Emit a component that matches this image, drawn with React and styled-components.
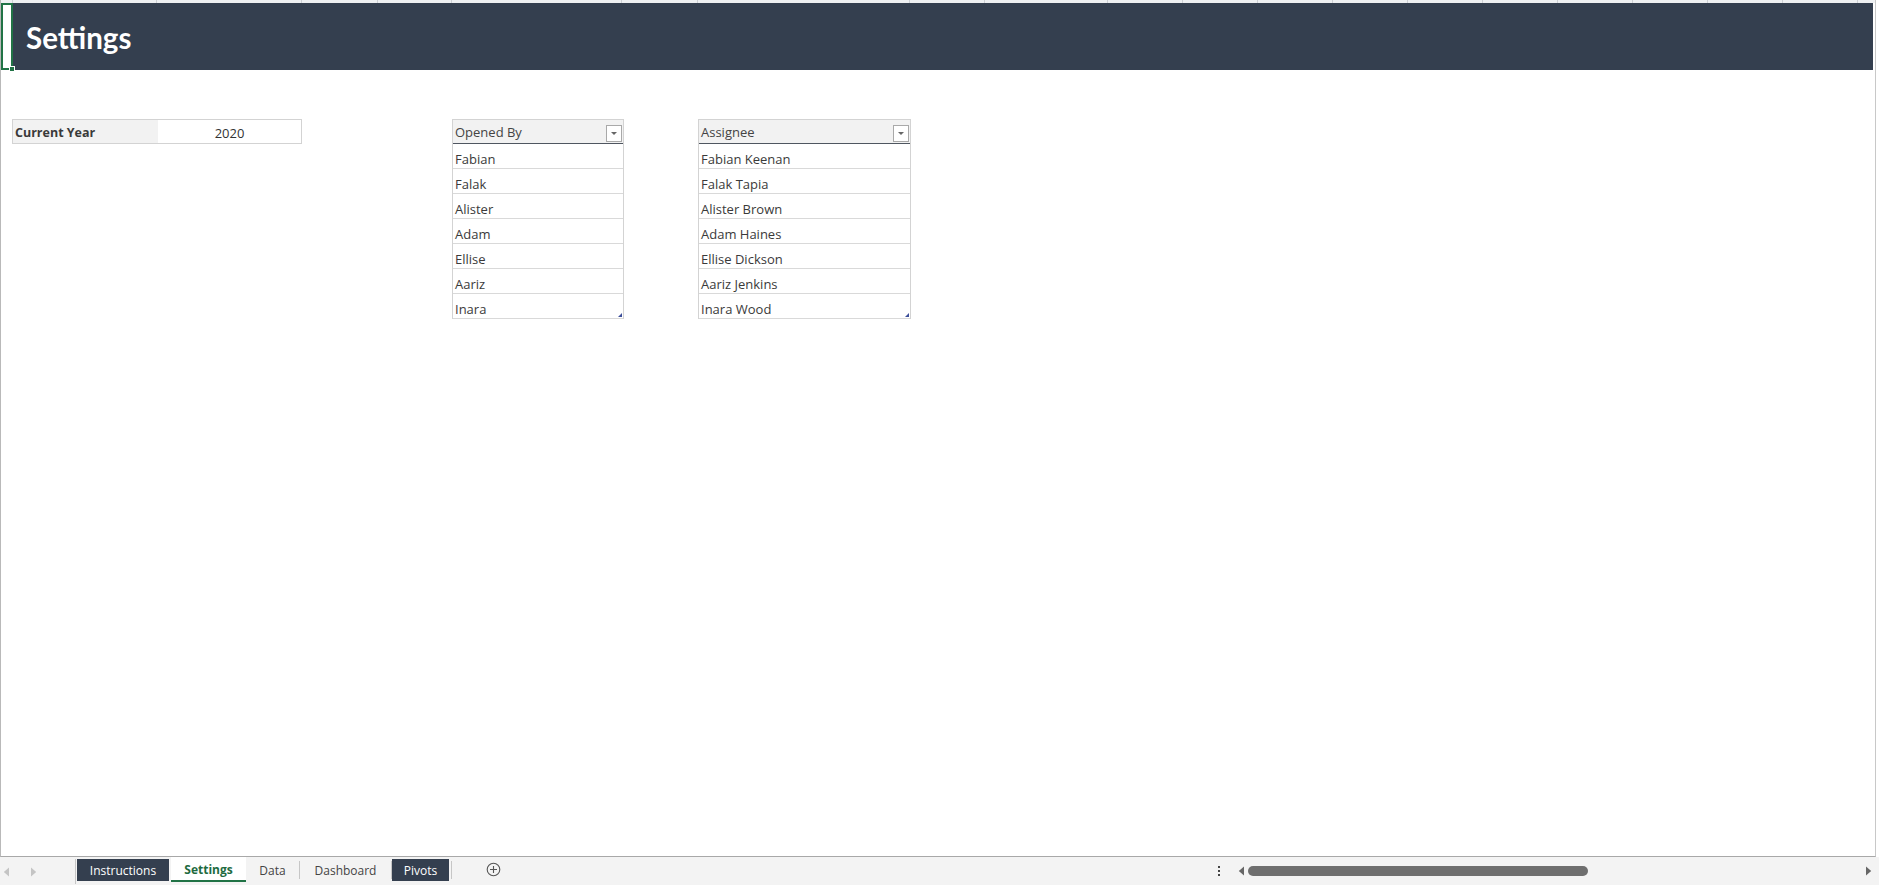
import React from 'react';
import styled, { createGlobalStyle } from 'styled-components';

const Global = createGlobalStyle`
  html, body { margin: 0; padding: 0; background: #fff; }
  body { font-family: "Open Sans", "Liberation Sans", sans-serif; color: #333; }
  #root { width: 1879px; height: 885px; overflow: hidden; }
  * { box-sizing: border-box; }
`;

const Page = styled.div`
  width: 1879px;
  height: 885px;
  display: flex;
  flex-direction: column;
  background: #fff;
`;

const Sheet = styled.div`
  flex: 1;
  min-height: 0;
  width: 1876px;
  display: flex;
  flex-direction: column;
  border-left: 1px solid #b9b9b9;
  border-right: 1px solid #c8c8c8;
  border-bottom: 1px solid #a8a8a8;
`;

const ColumnStrip = styled.div`
  display: flex;
  height: 3px;
  background: #eef0f2;
  overflow: hidden;
`;

const Col = styled.div`
  flex: 0 0 ${(p) => p.$w}px;
  border-right: 1px solid #cdd0d4;
`;

const HeaderRow = styled.div`
  display: flex;
  height: 67px;
  margin-right: 2px;
`;

const SelectedCell = styled.div`
  position: relative;
  width: 12px;
  border: 2px solid #217346;
`;

const FillHandle = styled.span`
  position: absolute;
  right: -4px;
  bottom: -4px;
  width: 6px;
  height: 6px;
  background: #217346;
  border: 1px solid #fff;
`;

const TitleBand = styled.div`
  flex: 1;
  display: flex;
  align-items: center;
  padding-left: 13px;
  background: #343f4f;
`;

const Title = styled.h1`
  margin: 0;
  padding-top: 1px;
  font-family: Lato, "Open Sans", sans-serif;
  font-weight: 700;
  font-size: 29.5px;
  color: #fff;
`;

const Content = styled.div`
  display: flex;
  align-items: flex-start;
  padding: 49px 0 0 11px;
`;

const YearBox = styled.div`
  display: flex;
  width: 290px;
  height: 25px;
  border: 1px solid #d3d3d3;
  font-size: 12.5px;
`;

const YearLabel = styled.div`
  width: 145px;
  display: flex;
  align-items: center;
  padding: 2px 0 0 2px;
  background: #f2f2f2;
  font-weight: 700;
  color: #3a3a3a;
`;

const YearValue = styled.div`
  flex: 1;
  display: flex;
  align-items: center;
  justify-content: center;
  padding-top: 2px;
  font-size: 13px;
  color: #333;
`;

const Table = styled.div`
  position: relative;
  width: ${(p) => p.$w}px;
  margin-left: ${(p) => p.$gap}px;
  border-left: 1px solid #d3d3d3;
  border-right: 1px solid #d3d3d3;
  font-size: 13px;
  color: #3a3a3a;
`;

const TableHead = styled.div`
  display: flex;
  align-items: center;
  justify-content: space-between;
  height: 25px;
  padding: 0 1px 0 2px;
  background: #f2f2f2;
  border-top: 1px solid #d3d3d3;
  border-bottom: 1px solid #4f5660;
  color: #444;
`;

const FilterButton = styled.span`
  display: flex;
  align-items: center;
  justify-content: center;
  align-self: flex-end;
  width: 16px;
  height: 17px;
  margin-bottom: 1px;
  background: #fff;
  border: 1px solid #a9a9a9;
`;

const Row = styled.div`
  height: 25px;
  display: flex;
  align-items: center;
  padding: 6px 0 0 2px;
  border-bottom: 1px solid #d9d9d9;
`;

const ResizeHandle = styled.span`
  position: absolute;
  right: 1px;
  bottom: 2px;
  width: 0;
  height: 0;
  border-left: 4px solid transparent;
  border-bottom: 4px solid #3d4f9a;
`;

const BottomBar = styled.div`
  height: 28px;
  display: flex;
  align-items: flex-start;
  background: #f3f3f3;
  font-size: 12px;
`;

const NavArrows = styled.div`
  width: 76px;
  height: 25px;
  display: flex;
  align-items: center;
  gap: 20px;
  padding-left: 3px;
  border-right: 1px solid #c6c6c6;
  margin-top: 2px;
`;

const Tabs = styled.div`
  display: flex;
  align-items: flex-start;
  padding-left: 1px;
`;

const Tab = styled.div`
  height: ${(p) => (p.$variant === 'active' ? 25 : 22)}px;
  margin-top: ${(p) => (p.$variant === 'active' ? 0 : 2)}px;
  margin-right: ${(p) => (p.$variant === 'dark' ? 2 : 0)}px;
  display: flex;
  align-items: center;
  justify-content: center;
  width: ${(p) => p.$w}px;
  white-space: nowrap;
  background: ${(p) => (p.$variant === 'dark' ? '#343f4f' : p.$variant === 'active' ? '#fff' : 'transparent')};
  color: ${(p) => (p.$variant === 'dark' ? '#fff' : p.$variant === 'active' ? '#1e6b3f' : '#444')};
  font-weight: ${(p) => (p.$variant === 'active' ? 700 : 400)};
  border-bottom: ${(p) => (p.$variant === 'active' ? '2px solid #217346' : 'none')};
  padding-top: ${(p) => (p.$variant === 'active' ? 1 : 0)}px;
`;

const TabSep = styled.span`
  width: 1px;
  height: 18px;
  margin-top: 4px;
  background: #c6c6c6;
`;

const AddSheet = styled.div`
  margin: 5px 0 0 34px;
  display: flex;
`;

const Spacer = styled.div`
  flex: 1;
`;

const ScrollArea = styled.div`
  display: flex;
  align-items: center;
  height: 28px;
  padding-right: 7px;
`;

const Dots = styled.div`
  display: flex;
  flex-direction: column;
  gap: 2px;
  margin-right: 18px;
  span {
    width: 2px;
    height: 2px;
    background: #444;
  }
`;

const Track = styled.div`
  display: flex;
  align-items: center;
  width: 620px;
`;

const Thumb = styled.div`
  width: 340px;
  height: 10px;
  margin-left: 3px;
  border-radius: 5px;
  background: #6e6e6e;
`;

const Arrow = ({ dir, color = '#b8b8b8', size = 7 }) => (
  <svg width={size} height={size + 3} viewBox="0 0 7 10">
    {dir === 'left' ? (
      <path d="M6 0.5 L0.8 5 L6 9.5 Z" fill={color} />
    ) : (
      <path d="M1 0.5 L6.2 5 L1 9.5 Z" fill={color} />
    )}
  </svg>
);

const DownCaret = () => (
  <svg width="8" height="5" viewBox="0 0 8 5">
    <path d="M1 1 L7 1 L4 4 Z" fill="#666" />
  </svg>
);

const PlusCircle = () => (
  <svg width="15" height="15" viewBox="0 0 15 15">
    <circle cx="7.5" cy="7.5" r="6.3" fill="none" stroke="#555" strokeWidth="1.1" />
    <path d="M7.5 4 V11 M4 7.5 H11" stroke="#555" strokeWidth="1.1" />
  </svg>
);

const columns = [12, 144, 145, 76, 74, 170, 76, 212, 75, 123, 75, 75, 75, 75, 75, 75, 75, 75, 75, 75, 40];

const openedBy = ['Fabian', 'Falak', 'Alister', 'Adam', 'Ellise', 'Aariz', 'Inara'];
const assignees = [
  'Fabian Keenan',
  'Falak Tapia',
  'Alister Brown',
  'Adam Haines',
  'Ellise Dickson',
  'Aariz Jenkins',
  'Inara Wood',
];

const tabs = [
  { label: 'Instructions', variant: 'dark', w: 92 },
  { label: 'Settings', variant: 'active', w: 75 },
  { label: 'Data', variant: 'plain', w: 53 },
  'sep',
  { label: 'Dashboard', variant: 'plain', w: 91 },
  'sep',
  { label: 'Pivots', variant: 'dark', w: 57 },
  'sep',
];

const DataTable = ({ title, items, w, gap }) => (
  <Table $w={w} $gap={gap}>
    <TableHead>
      <span>{title}</span>
      <FilterButton>
        <DownCaret />
      </FilterButton>
    </TableHead>
    {items.map((it) => (
      <Row key={it}>{it}</Row>
    ))}
    <ResizeHandle />
  </Table>
);

export default function App() {
  return (
    <Page>
      <Global />
      <Sheet>
        <ColumnStrip>
          {columns.map((w, i) => (
            <Col key={i} $w={w} />
          ))}
        </ColumnStrip>
        <HeaderRow>
          <SelectedCell>
            <FillHandle />
          </SelectedCell>
          <TitleBand>
            <Title>Settings</Title>
          </TitleBand>
        </HeaderRow>
        <Content>
          <YearBox>
            <YearLabel>Current Year</YearLabel>
            <YearValue>2020</YearValue>
          </YearBox>
          <DataTable title="Opened By" items={openedBy} w={172} gap={150} />
          <DataTable title="Assignee" items={assignees} w={213} gap={74} />
        </Content>
      </Sheet>
      <BottomBar>
        <NavArrows>
          <Arrow dir="left" color="#c4c4c4" />
          <Arrow dir="right" color="#c4c4c4" />
        </NavArrows>
        <Tabs>
          {tabs.map((t, i) =>
            t === 'sep' ? (
              <TabSep key={i} />
            ) : (
              <Tab key={i} $variant={t.variant} $w={t.w}>
                {t.label}
              </Tab>
            )
          )}
        </Tabs>
        <AddSheet>
          <PlusCircle />
        </AddSheet>
        <Spacer />
        <ScrollArea>
          <Dots>
            <span />
            <span />
            <span />
          </Dots>
          <Arrow dir="left" color="#666" />
          <Track>
            <Thumb />
          </Track>
          <Arrow dir="right" color="#666" />
        </ScrollArea>
      </BottomBar>
    </Page>
  );
}
